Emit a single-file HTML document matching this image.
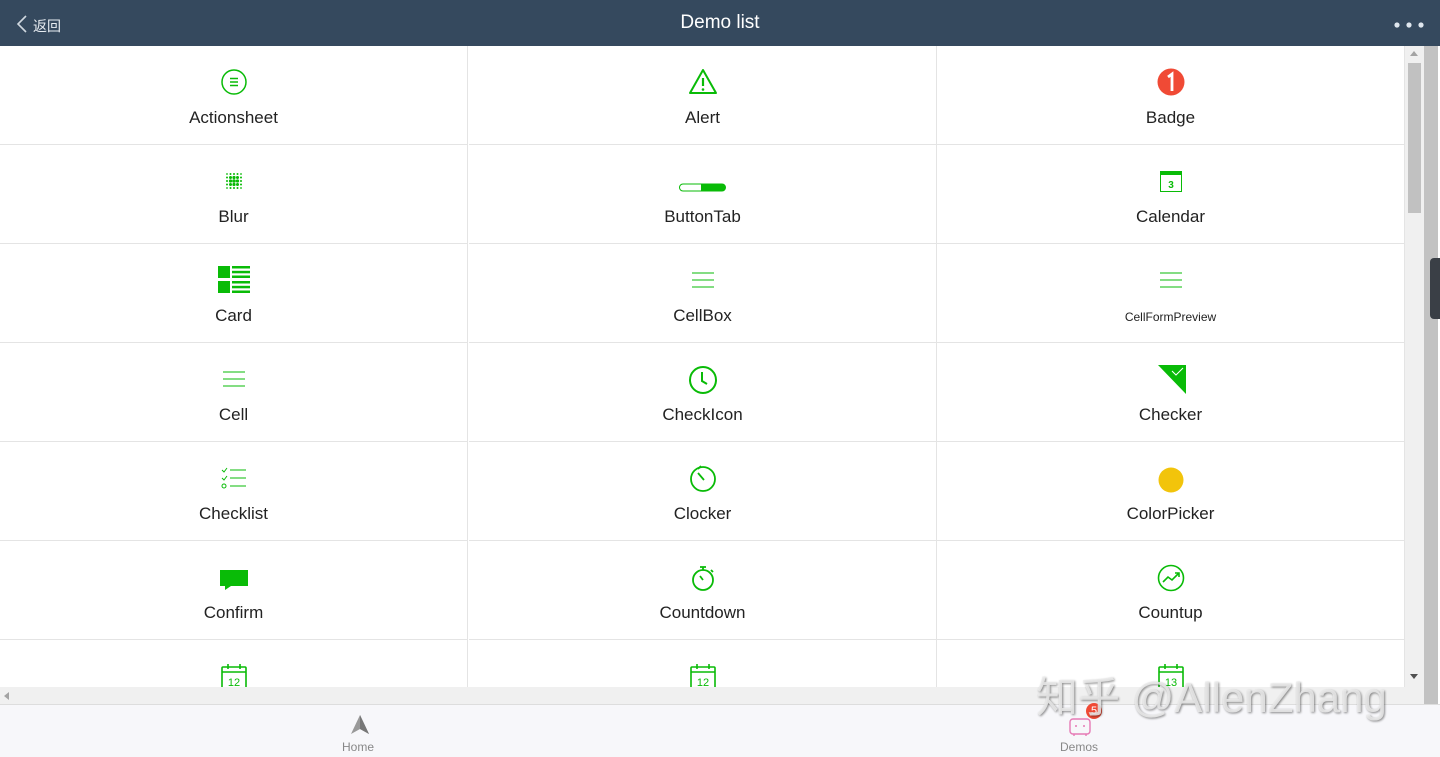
<!DOCTYPE html>
<html><head><meta charset="utf-8"><style>
*{margin:0;padding:0;box-sizing:border-box}
body{width:1440px;height:757px;overflow:hidden;background:#fff;font-family:"Liberation Sans","Noto Sans CJK SC",sans-serif;position:relative}
.hdr{position:absolute;left:0;top:0;width:1440px;height:46px;background:#35495e;color:#fff}
.hdr .t{position:absolute;left:0;width:1440px;top:12px;text-align:center;font-size:19px}
.hdr .b{position:absolute;left:33px;top:16px;font-size:14px;color:#e8edf2}
.grid{position:absolute;left:0;top:46px;width:1405px;height:641px;overflow:hidden}
.c{position:absolute;width:468px;height:99px;border-right:1px solid #e4e4e4;border-bottom:1px solid #e4e4e4}
.c .ic{position:absolute;left:50%;top:19px;width:34px;height:34px;margin-left:-17px}
.c .l{position:absolute;left:0;right:0;top:62px;text-align:center;font-size:17px;color:#222}
.vs{position:absolute;left:1405px;top:46px;width:19px;height:641px;background:#f0f0f0}
.tab{position:absolute;left:0;top:704px;width:1440px;height:53px;background:#f7f7fa;border-top:1px solid #ddd}
.tab .l{position:absolute;font-size:12px;color:#888;top:35px}
</style></head><body>
<div class="hdr">
<svg style="position:absolute;left:15px;top:14px" width="14" height="20"><path d="M11 2 L3 10 L11 18" stroke="#d0d8e0" stroke-width="1.6" fill="none"/></svg>
<div class="b">返回</div>
<div class="t">Demo list</div>
<svg style="position:absolute;left:1393px;top:21px" width="34" height="8"><circle cx="4" cy="4" r="2.6" fill="#dfe6ee"/><circle cx="16" cy="4" r="2.6" fill="#dfe6ee"/><circle cx="28" cy="4" r="2.6" fill="#dfe6ee"/></svg>
</div>
<div class="grid">
<div class="c" style="left:0;top:0"><svg class="ic" viewBox="0 0 34 34"><circle cx="17" cy="17" r="12" stroke="#09bb07" stroke-width="1.5" fill="none"/><path d="M13 13.5h8M13 17h8M13 20.5h8" stroke="#09bb07" stroke-width="1.4"/></svg><div class="l">Actionsheet</div></div>
<div class="c" style="left:469px;top:0"><svg class="ic" viewBox="0 0 34 34"><path d="M17 5 L30 28 H4 Z" stroke="#09bb07" stroke-width="2" fill="none" stroke-linejoin="round"/><path d="M17 13v8" stroke="#09bb07" stroke-width="2.2"/><circle cx="17" cy="24.5" r="1.3" fill="#09bb07"/></svg><div class="l">Alert</div></div>
<div class="c" style="left:937px;top:0"><svg class="ic" viewBox="0 0 34 34"><circle cx="17" cy="17" r="13.5" fill="#f04a35"/><path d="M14 12 l4-3 v17" stroke="#fff" stroke-width="2.8" fill="none"/></svg><div class="l">Badge</div></div>
<div class="c" style="left:0;top:99px"><svg class="ic" viewBox="0 0 34 34"><g fill="#09bb07"><circle cx="10" cy="10" r=".9"/><circle cx="13.5" cy="10" r="1"/><circle cx="17" cy="10" r="1"/><circle cx="20.5" cy="10" r="1"/><circle cx="24" cy="10" r=".9"/><circle cx="10" cy="13.5" r="1"/><circle cx="13.5" cy="13.5" r="1.5"/><circle cx="17" cy="13.5" r="1.6"/><circle cx="20.5" cy="13.5" r="1.5"/><circle cx="24" cy="13.5" r="1"/><circle cx="10" cy="17" r="1"/><circle cx="13.5" cy="17" r="1.6"/><circle cx="17" cy="17" r="1.8"/><circle cx="20.5" cy="17" r="1.6"/><circle cx="24" cy="17" r="1"/><circle cx="10" cy="20.5" r="1"/><circle cx="13.5" cy="20.5" r="1.5"/><circle cx="17" cy="20.5" r="1.6"/><circle cx="20.5" cy="20.5" r="1.5"/><circle cx="24" cy="20.5" r="1"/><circle cx="10" cy="24" r=".9"/><circle cx="13.5" cy="24" r="1"/><circle cx="17" cy="24" r="1"/><circle cx="20.5" cy="24" r="1"/><circle cx="24" cy="24" r=".9"/></g></svg><div class="l">Blur</div></div>
<div class="c" style="left:469px;top:99px"><svg class="ic" style="width:50px;margin-left:-25px" viewBox="0 0 50 34"><rect x="1.5" y="20" width="46" height="7" rx="3.5" stroke="#09bb07" stroke-width="1" fill="none"/><path d="M23 20h21a3.5 3.5 0 0 1 0 7H23z" fill="#09bb07"/></svg><div class="l">ButtonTab</div></div>
<div class="c" style="left:937px;top:99px"><svg class="ic" viewBox="0 0 34 34"><rect x="6.5" y="7.5" width="21" height="20" stroke="#09bb07" stroke-width="1" fill="none"/><rect x="6" y="7" width="22" height="4" fill="#09bb07"/><text x="17" y="24" text-anchor="middle" font-size="10" font-weight="bold" fill="#09bb07" font-family="Liberation Sans">3</text></svg><div class="l">Calendar</div></div>
<div class="c" style="left:0;top:198px"><svg class="ic" viewBox="0 0 34 34"><g fill="#09bb07"><rect x="1" y="3" width="12" height="12"/><rect x="1" y="18" width="12" height="12"/><rect x="15" y="3" width="18" height="2.5"/><rect x="15" y="7.8" width="18" height="2.5"/><rect x="15" y="12.5" width="18" height="2.5"/><rect x="15" y="18" width="18" height="2.5"/><rect x="15" y="22.8" width="18" height="2.5"/><rect x="15" y="27.5" width="18" height="2.5"/></g></svg><div class="l">Card</div></div>
<div class="c" style="left:469px;top:198px"><svg class="ic" viewBox="0 0 34 34"><path d="M6 10h22M6 17h22M6 24h22" stroke="#09bb07" stroke-width="1"/></svg><div class="l">CellBox</div></div>
<div class="c" style="left:937px;top:198px"><svg class="ic" viewBox="0 0 34 34"><path d="M6 10h22M6 17h22M6 24h22" stroke="#09bb07" stroke-width="1"/></svg><div class="l" style="font-size:12px;top:66px">CellFormPreview</div></div>
<div class="c" style="left:0;top:297px"><svg class="ic" viewBox="0 0 34 34"><path d="M6 10h22M6 17h22M6 24h22" stroke="#09bb07" stroke-width="1"/></svg><div class="l">Cell</div></div>
<div class="c" style="left:469px;top:297px"><svg class="ic" viewBox="0 0 34 34"><circle cx="17" cy="18" r="13" stroke="#09bb07" stroke-width="2" fill="none"/><path d="M16 10v9l5 3" stroke="#09bb07" stroke-width="2" fill="none"/></svg><div class="l">CheckIcon</div></div>
<div class="c" style="left:937px;top:297px"><svg class="ic" viewBox="0 0 34 34"><path d="M4 3H32V32Z" fill="#09bb07"/><path d="M18 9l4 4 7-7" stroke="#fff" stroke-width="1" fill="none"/></svg><div class="l">Checker</div></div>
<div class="c" style="left:0;top:396px"><svg class="ic" viewBox="0 0 34 34"><g stroke="#09bb07" stroke-width="1" fill="none"><path d="M5 9l2 2 3-4M5 17l2 2 3-4"/><circle cx="7" cy="25" r="2"/><path d="M13 9h16M13 17h16M13 25h16"/></g></svg><div class="l">Checklist</div></div>
<div class="c" style="left:469px;top:396px"><svg class="ic" viewBox="0 0 34 34"><circle cx="17" cy="18" r="12" stroke="#09bb07" stroke-width="1.8" fill="none"/><path d="M12 12l6 7M15 5l-3 3" stroke="#09bb07" stroke-width="1.8"/></svg><div class="l">Clocker</div></div>
<div class="c" style="left:937px;top:396px"><svg class="ic" viewBox="0 0 34 34"><circle cx="17" cy="19" r="12.5" fill="#f2c40b"/></svg><div class="l">ColorPicker</div></div>
<div class="c" style="left:0;top:495px"><svg class="ic" viewBox="0 0 34 34"><path d="M3 10h28v16H14l-6 4v-4H3z" fill="#09bb07"/></svg><div class="l">Confirm</div></div>
<div class="c" style="left:469px;top:495px"><svg class="ic" viewBox="0 0 34 34"><circle cx="17" cy="20" r="10" stroke="#09bb07" stroke-width="1.8" fill="none"/><path d="M14 7h6M17 7v3M17 20l-3-4M25 10l2 2" stroke="#09bb07" stroke-width="1.8"/></svg><div class="l">Countdown</div></div>
<div class="c" style="left:937px;top:495px"><svg class="ic" viewBox="0 0 34 34"><circle cx="17" cy="18" r="12.5" stroke="#09bb07" stroke-width="1.6" fill="none"/><path d="M9 22l5-5 4 3 7-7M21 13h4v4" stroke="#09bb07" stroke-width="1.6" fill="none"/></svg><div class="l">Countup</div></div>
<div class="c" style="left:0;top:594px"><svg class="ic" viewBox="0 0 34 34"><rect x="5" y="8" width="24" height="22" rx="1" stroke="#09bb07" stroke-width="1.6" fill="none"/><path d="M5 13h24M11 5v5M23 5v5" stroke="#09bb07" stroke-width="1.6"/><text x="17" y="27" text-anchor="middle" font-size="11" fill="#09bb07" font-family="Liberation Sans">12</text></svg></div>
<div class="c" style="left:469px;top:594px"><svg class="ic" viewBox="0 0 34 34"><rect x="5" y="8" width="24" height="22" rx="1" stroke="#09bb07" stroke-width="1.6" fill="none"/><path d="M5 13h24M11 5v5M23 5v5" stroke="#09bb07" stroke-width="1.6"/><text x="17" y="27" text-anchor="middle" font-size="11" fill="#09bb07" font-family="Liberation Sans">12</text></svg></div>
<div class="c" style="left:937px;top:594px"><svg class="ic" viewBox="0 0 34 34"><rect x="5" y="8" width="24" height="22" rx="1" stroke="#09bb07" stroke-width="1.6" fill="none"/><path d="M5 13h24M11 5v5M23 5v5" stroke="#09bb07" stroke-width="1.6"/><text x="17" y="27" text-anchor="middle" font-size="11" fill="#09bb07" font-family="Liberation Sans">13</text></svg></div>
</div>
<div class="vs"><div style="position:absolute;left:3px;top:17px;width:13px;height:150px;background:#c1c1c1"></div>
<div style="position:absolute;left:5px;top:5px;border:4px solid transparent;border-bottom:5px solid #a3a3a3;border-top:0"></div>
<div style="position:absolute;left:5px;top:628px;border:4px solid transparent;border-top:5px solid #505050;border-bottom:0"></div></div>
<div style="position:absolute;left:0;top:687px;width:1424px;height:17px;background:#f0f0f0"><div style="position:absolute;left:4px;top:5px;border:4px solid transparent;border-right:5px solid #a3a3a3;border-left:0"></div></div>
<div style="position:absolute;left:1424px;top:46px;width:14px;height:658px;background:#c2c2c2"></div>
<div style="position:absolute;left:1430px;top:258px;width:10px;height:61px;background:#3a3f46;border-radius:4px 0 0 4px"></div>
<div class="tab">
<svg style="position:absolute;left:349px;top:9px" width="22" height="22" viewBox="0 0 22 22"><path d="M11 1 L20 20 L11 15 L2 20 Z" fill="#999"/><path d="M11 1 L11 15 L20 20Z" fill="#777"/></svg>
<div class="l" style="left:342px">Home</div>
<svg style="position:absolute;left:1068px;top:11px" width="24" height="22" viewBox="0 0 24 22"><rect x="2" y="3" width="20" height="15" rx="3" stroke="#e67ab5" stroke-width="1.4" fill="none"/><circle cx="8" cy="10" r="1" fill="#e67ab5"/><circle cx="16" cy="10" r="1" fill="#e67ab5"/><path d="M6 18v2M18 18v2" stroke="#e67ab5" stroke-width="1.4"/></svg>
<div style="position:absolute;left:1086px;top:-2px;width:16px;height:16px;border-radius:8px;background:#f04a35;color:#fff;font-size:11px;text-align:center;line-height:16px">5</div>
<div class="l" style="left:1060px">Demos</div>
</div>
<div style="position:absolute;left:1036px;top:664px;font-size:42px;color:rgba(235,235,235,.85);text-shadow:1px 1px 2px rgba(0,0,0,.45);font-family:'Liberation Sans','Noto Sans CJK SC',sans-serif;white-space:nowrap">知乎 @AllenZhang</div>
</body></html>
